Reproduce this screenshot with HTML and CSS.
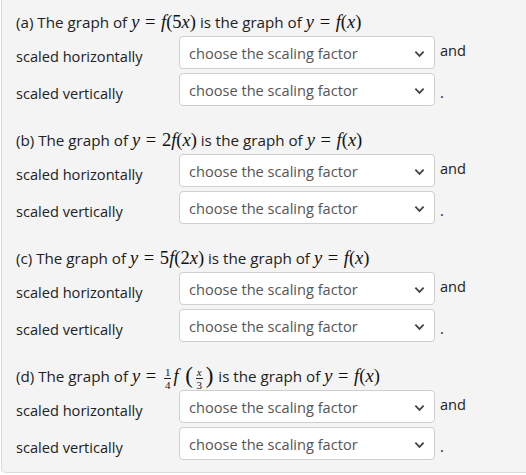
FILE: index.html
```html
<!DOCTYPE html>
<html>
<head>
<meta charset="utf-8">
<link rel="stylesheet" href="styles.css">
</head>
<body>
<div class="panel">
  <div class="part">
    <div class="title">(a) The graph of <span class="m"><i>y</i> = <i>f</i>(5<i>x</i>)</span> is the graph of <span class="m"><i>y</i> = <i>f</i>(<i>x</i>)</span></div>
    <div class="row"><span class="label">scaled horizontally</span><span class="select">choose the scaling factor<svg class="chev" viewBox="0 0 12 8"><path d="M1.5 1.5 L6 6 L10.5 1.5" /></svg></span><span class="after and">and</span></div>
    <div class="row"><span class="label">scaled vertically</span><span class="select">choose the scaling factor<svg class="chev" viewBox="0 0 12 8"><path d="M1.5 1.5 L6 6 L10.5 1.5" /></svg></span><span class="after dot">.</span></div>
  </div>
  <div class="part">
    <div class="title">(b) The graph of <span class="m"><i>y</i> = 2<i>f</i>(<i>x</i>)</span> is the graph of <span class="m"><i>y</i> = <i>f</i>(<i>x</i>)</span></div>
    <div class="row"><span class="label">scaled horizontally</span><span class="select">choose the scaling factor<svg class="chev" viewBox="0 0 12 8"><path d="M1.5 1.5 L6 6 L10.5 1.5" /></svg></span><span class="after and">and</span></div>
    <div class="row"><span class="label">scaled vertically</span><span class="select">choose the scaling factor<svg class="chev" viewBox="0 0 12 8"><path d="M1.5 1.5 L6 6 L10.5 1.5" /></svg></span><span class="after dot">.</span></div>
  </div>
  <div class="part">
    <div class="title">(c) The graph of <span class="m"><i>y</i> = 5<i>f</i>(2<i>x</i>)</span> is the graph of <span class="m"><i>y</i> = <i>f</i>(<i>x</i>)</span></div>
    <div class="row"><span class="label">scaled horizontally</span><span class="select">choose the scaling factor<svg class="chev" viewBox="0 0 12 8"><path d="M1.5 1.5 L6 6 L10.5 1.5" /></svg></span><span class="after and">and</span></div>
    <div class="row"><span class="label">scaled vertically</span><span class="select">choose the scaling factor<svg class="chev" viewBox="0 0 12 8"><path d="M1.5 1.5 L6 6 L10.5 1.5" /></svg></span><span class="after dot">.</span></div>
  </div>
  <div class="part">
    <div class="title">(d) The graph of <span class="m"><i>y</i> = <span class="frac"><span class="num">1</span><span class="den">4</span></span><i>f</i> <span class="big">(</span><span class="frac"><span class="num"><i>x</i></span><span class="den">3</span></span><span class="big">)</span></span> is the graph of <span class="m"><i>y</i> = <i>f</i>(<i>x</i>)</span></div>
    <div class="row"><span class="label">scaled horizontally</span><span class="select">choose the scaling factor<svg class="chev" viewBox="0 0 12 8"><path d="M1.5 1.5 L6 6 L10.5 1.5" /></svg></span><span class="after and">and</span></div>
    <div class="row"><span class="label">scaled vertically</span><span class="select">choose the scaling factor<svg class="chev" viewBox="0 0 12 8"><path d="M1.5 1.5 L6 6 L10.5 1.5" /></svg></span><span class="after dot">.</span></div>
  </div>
</div>
</body>
</html>
```
FILE: styles.css
```css
html, body {
  margin: 0;
  padding: 0;
  background: #ffffff;
  overflow: hidden;
}
body {
  font-family: "Open Sans", "Noto Sans", sans-serif;
  font-size: 14.6px;
  color: #222;
}
.panel {
  margin-left: 1px;
  width: 560px;
  height: 473px;
  background: #f4f4f4;
  border-left: 1px solid #dcdcdc;
  border-bottom: 1px solid #dcdcdc;
  border-bottom-left-radius: 5px;
  box-sizing: border-box;
  padding: 9px 0 0 14px;
  overflow: hidden;
}
.part {
  display: flex;
  flex-direction: column;
  gap: 4px;
  margin-bottom: 21px;
}
.title {
  height: 22px;
  line-height: 26px;
  margin-bottom: 1px;
  white-space: nowrap;
  font-size: 15.2px;
}
.m {
  font-family: "Liberation Serif", "DejaVu Serif", serif;
  font-size: 18.5px;
  color: #111;
  word-spacing: 1px;
}
.m i {
  font-style: italic;
}
.frac {
  display: inline-flex;
  flex-direction: column;
  vertical-align: 6px;
  font-size: 11px;
  line-height: 10px;
  text-align: center;
  margin: 0 2px;
}
.frac .num {
  border-bottom: 1px solid #222;
  padding: 0 1px 1px;
}
.frac .den {
  padding-top: 1px;
}
.big {
  font-size: 23px;
  vertical-align: -1px;
  margin: 0 1px;
}
.row {
  display: flex;
  align-items: center;
  height: 33px;
}
.label {
  width: 163px;
  flex: none;
  padding-top: 6px;
}
.select {
  position: relative;
  box-sizing: border-box;
  width: 256px;
  height: 33px;
  background: #fff;
  border: 1px solid #cfcfcf;
  border-radius: 4px;
  padding-left: 9px;
  display: flex;
  align-items: center;
  color: #555;
  flex: none;
}
.chev {
  position: absolute;
  right: 9px;
  top: 13px;
  width: 11px;
  height: 8px;
}
.chev path {
  fill: none;
  stroke: #444;
  stroke-width: 2;
}
.after {
  margin-left: 5px;
  align-self: flex-start;
}
.and {
  margin-top: 4px;
}
.dot {
  margin-top: 9px;
}
```
